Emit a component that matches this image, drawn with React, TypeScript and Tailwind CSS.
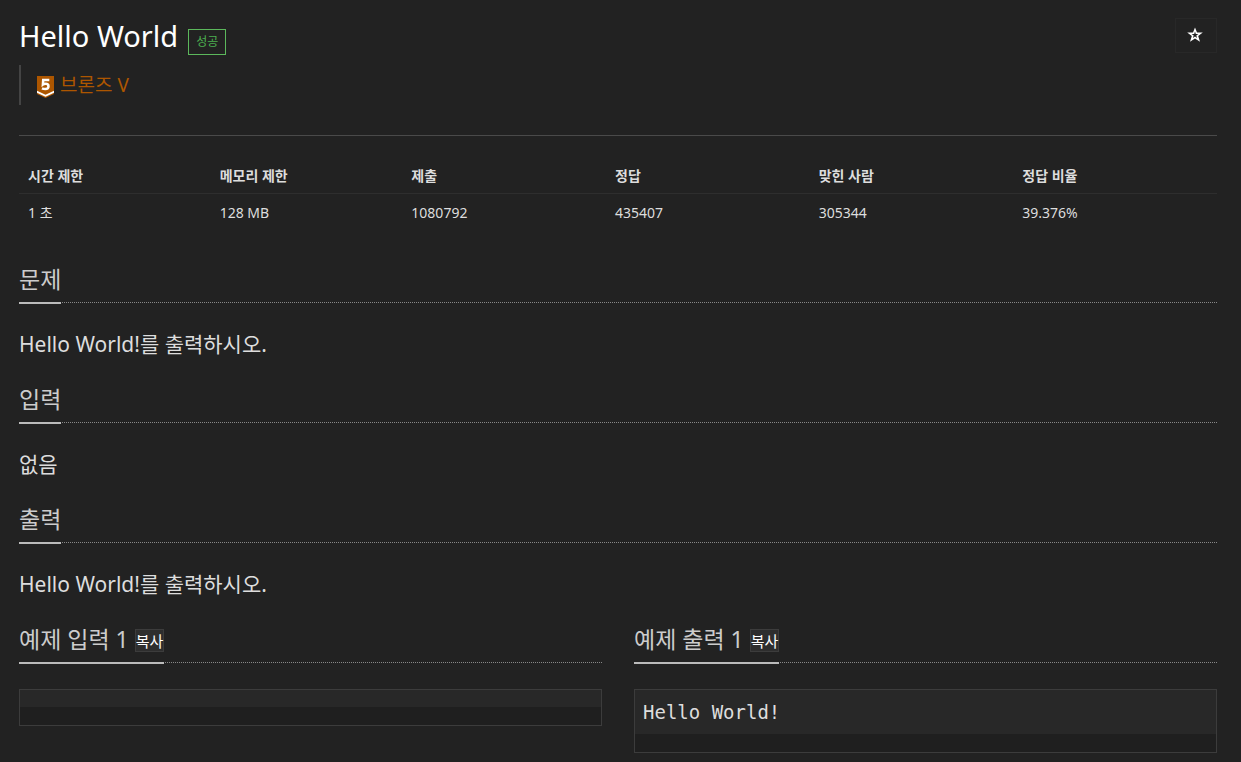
import type { ReactNode } from "react";

const limits = [
  { label: "시간 제한", value: "1 초", width: "w-[16%]" },
  { label: "메모리 제한", value: "128 MB", width: "w-[16%]" },
  { label: "제출", value: "1080792", width: "w-[17%]" },
  { label: "정답", value: "435407", width: "w-[17%]" },
  { label: "맞힌 사람", value: "305344", width: "w-[17%]" },
  { label: "정답 비율", value: "39.376%", width: "w-[17%]" },
];

const sections = [
  { title: "문제", body: "Hello World!를 출력하시오." },
  { title: "입력", body: "없음" },
  { title: "출력", body: "Hello World!를 출력하시오." },
];

function TierIcon() {
  return (
    <svg viewBox="0 0 17 22" className="h-[22px] w-[17px]" aria-hidden="true">
      <path d="M0 0h17v18L8.500 22 0 18z" fill="#ad5600" />
      <path d="M0 14.800l8.500 4 8.500-4v1.900l-8.500 4L0 16.700z" fill="#fff" />
      <path
        d="M12.300 4.100H6.200L5.900 8.600C6.700 8 7.600 7.700 8.600 7.700c1.900 0 2.900.9 2.900 2.500 0 1.800-1.200 2.800-3.200 2.800-1.300 0-2.300-.2-3.300-.7"
        fill="none"
        stroke="#fff"
        strokeWidth="2.500"
      />
    </svg>
  );
}

function StarIcon() {
  return (
    <svg viewBox="0 0 16 16" className="h-4 w-4" aria-hidden="true">
      <path
        d="M8 .4l2 5.200h5.800l-4.600 3.500 1.800 5.700L8 11.400l-5 3.400 1.800-5.700L.2 5.600H6zM8 4.400L7.200 7H4.600l2.100 1.500-.8 2.500L8 9.500l2.100 1.500-.8-2.500L11.400 7H8.800z"
        fill="#fff"
        fillRule="evenodd"
      />
    </svg>
  );
}

function SectionHeading({ children }: { children: ReactNode }) {
  return (
    <div className="flex h-10 border-b border-dotted border-[#888]">
      <div className="-mb-0.5 flex items-center gap-1.5 border-b-2 border-[#bbb] pb-2">
        {children}
      </div>
    </div>
  );
}

function Sample({ title, children }: { title: string; children: ReactNode }) {
  return (
    <section>
      <SectionHeading>
        <h2 className="text-[23px] leading-8 text-[#ccc]">{title}</h2>
        <button
          type="button"
          className="mt-1 h-[23px] border border-[#3c3c3c] bg-[#2e2e2e] text-[15px] leading-5 text-white"
        >
          복사
        </button>
      </SectionHeading>
      {children}
    </section>
  );
}

export default function App() {
  return (
    <main className="min-h-screen bg-[#222] pt-[18px] pr-6 pb-[9px] pl-[19px] font-['Noto_Sans','Noto_Sans_CJK_KR',sans-serif] text-[#ddd]">
      <header className="flex h-[118px] items-start justify-between border-b border-[#4a4a4a]">
        <div>
          <div className="flex h-[37px] items-start gap-2.5">
            <h1 className="text-[29px] leading-9 text-white">Hello World</h1>
            <span className="mt-[11px] h-[26px] border border-[#5cb85c] px-[7px] text-xs leading-6 text-[#4caf50]">
              성공
            </span>
          </div>
          <div className="mt-[10px] flex h-10 items-center gap-[6px] border-l-2 border-[#444] pl-4 text-[#ad5600]">
            <span className="pt-1">
              <TierIcon />
            </span>
            <span className="text-[19px] leading-7">브론즈 V</span>
          </div>
        </div>
        <button
          type="button"
          aria-label="즐겨찾기"
          className="flex h-[35px] w-[42px] items-center justify-center border border-[#282828] pr-0.5 pb-0.5"
        >
          <StarIcon />
        </button>
      </header>

      <table className="mt-[21px] w-full table-fixed text-left text-sm leading-5">
        <thead>
          <tr className="border-b border-[#2e2e2e]">
            {limits.map((limit) => (
              <th key={limit.label} className={`${limit.width} px-[9px] pt-[9px] pb-[7px] font-bold`}>
                {limit.label}
              </th>
            ))}
          </tr>
        </thead>
        <tbody>
          <tr>
            {limits.map((limit) => (
              <td key={limit.label} className="px-[9px] py-[9px]">
                {limit.value}
              </td>
            ))}
          </tr>
        </tbody>
      </table>

      <div className="mt-[31px]">
        {sections.map((section) => (
          <section key={section.title}>
            <SectionHeading>
              <h2 className="text-[23px] leading-8 text-[#ccc]">{section.title}</h2>
            </SectionHeading>
            <p className="pt-[26px] pb-6 text-[21px] leading-[30px]">{section.body}</p>
          </section>
        ))}
      </div>

      <div className="grid grid-cols-2 items-start gap-8">
        <Sample title="예제 입력 1">
          <pre className="mt-[26px] border border-[#3c3c3c] bg-[#1f1f1f] pb-[18px]">
            <code className="block h-[17px] bg-[#282828]" />
          </pre>
        </Sample>
        <Sample title="예제 출력 1">
          <pre className="mt-[26px] border border-[#3c3c3c] bg-[#1f1f1f] pb-[18px]">
            <code className="block bg-[#282828] px-2 py-[9px] font-['DejaVu_Sans_Mono',monospace] text-[19px] leading-[26px]">
              Hello World!
            </code>
          </pre>
        </Sample>
      </div>
    </main>
  );
}
